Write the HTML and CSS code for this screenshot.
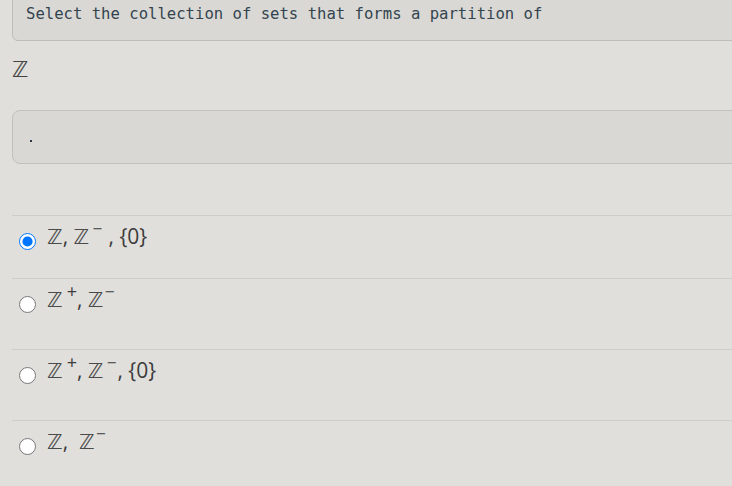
FILE: index.html
```html
<!DOCTYPE html>
<html lang="en">
<head>
<meta charset="utf-8">
<title>Partition question</title>
<link rel="stylesheet" href="styles.css">
</head>
<body>
<div class="page">
  <div class="prompt">Select the collection of sets that forms a partition of</div>
  <div class="set">ℤ</div>
  <div class="answer-box"><span class="dot"></span></div>
  <ul class="options">
    <li class="option short"><input type="radio" name="p" class="radio" checked><span class="label"><span class="z">ℤ</span>, <span class="z">ℤ</span><sup class="minus">−</sup> , {0}</span></li>
    <li class="option"><input type="radio" name="p" class="radio"><span class="label"><span class="z">ℤ</span><sup class="plus">+</sup>, <span class="z">ℤ</span><sup class="minus tight">−</sup></span></li>
    <li class="option"><input type="radio" name="p" class="radio"><span class="label"><span class="z">ℤ</span><sup class="plus">+</sup>, <span class="z">ℤ</span><sup class="minus">−</sup>, {0}</span></li>
    <li class="option"><input type="radio" name="p" class="radio"><span class="label"><span class="z">ℤ</span>, &nbsp;<span class="z">ℤ</span><sup class="minus tight">−</sup></span></li>
  </ul>
</div>
</body>
</html>
```
FILE: styles.css
```css
html, body {
  margin: 0;
  padding: 0;
  background: #e0dfdb;
  overflow: hidden;
}
.page {
  padding-left: 12px;
  width: 760px;
  font-family: "DejaVu Sans", sans-serif;
}
.prompt {
  margin-top: -8px;
  height: 49px;
  box-sizing: border-box;
  padding: 11px 0 0 13px;
  background: #d9d8d4;
  border: 1px solid #bebdb9;
  border-radius: 6px;
  font-family: "DejaVu Sans Mono", monospace;
  font-size: 15.6px;
  line-height: 20px;
  color: #33444f;
}
.set {
  margin-top: 14px;
  height: 30px;
  font-size: 22px;
  line-height: 30px;
  color: #444;
}
.answer-box {
  margin-top: 25px;
  height: 54px;
  box-sizing: border-box;
  background: #d9d8d4;
  border: 1px solid #c2c1bd;
  border-radius: 8px;
  padding: 29px 0 0 17px;
}
.dot {
  display: block;
  width: 2px;
  height: 2px;
  background: #2c3a45;
}
.options {
  list-style: none;
  margin: 51px 0 0 0;
  padding: 0;
}
.option {
  display: flex;
  align-items: flex-start;
  gap: 11px;
  height: 71px;
  box-sizing: border-box;
  border-top: 1px solid #cdccc8;
  padding: 17px 0 0 7px;
}
.option.short {
  height: 63px;
}
.radio {
  margin: 0;
  width: 17px;
  height: 17px;
  flex: none;
  accent-color: #0075ff;
}
.label {
  margin-top: -9px;
  font-family: "Open Sans", "DejaVu Sans", sans-serif;
  font-size: 21px;
  line-height: 24px;
  color: #3b3b3b;
}
.z {
  font-family: "DejaVu Sans", sans-serif;
  font-size: 21px;
  color: #4a4a4a;
}
.label sup {
  line-height: 0;
}
.label sup.minus {
  font-family: "DejaVu Sans", sans-serif;
  font-size: 13px;
  vertical-align: 11px;
  margin-left: 3px;
}
.label sup.plus {
  font-size: 18px;
  vertical-align: 9px;
  margin-left: 4px;
}
.label sup.tight {
  margin-left: 1px;
}
```
